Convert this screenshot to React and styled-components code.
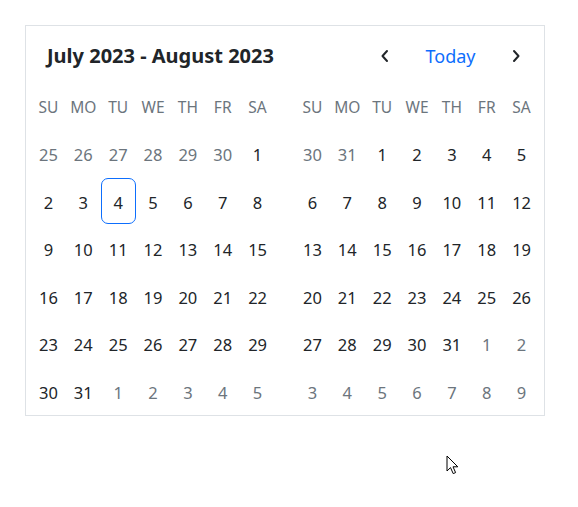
import React from 'react'
import styled, { createGlobalStyle } from 'styled-components'

const GlobalStyle = createGlobalStyle`
    body {
        margin: 0;
        background: #ffffff;
        font-family: "Noto Sans", "Open Sans", sans-serif;
        color: #212529;
    }
`

const WEEKDAYS = ['SU', 'MO', 'TU', 'WE', 'TH', 'FR', 'SA']

const range = (a, b) => {
    const out = []
    for (let i = a; i <= b; i++) out.push(i)
    return out
}

const months = [
    {
        key: 'jul',
        days: [
            ...range(25, 30).map(d => ({ d, muted: true })),
            ...range(1, 31).map(d => ({ d, selected: d === 4 })),
            ...range(1, 5).map(d => ({ d, muted: true })),
        ],
    },
    {
        key: 'aug',
        days: [
            ...range(30, 31).map(d => ({ d, muted: true })),
            ...range(1, 31).map(d => ({ d })),
            ...range(1, 9).map(d => ({ d, muted: true })),
        ],
    },
]

const ChevronLeft = () => (
    <svg width="10" height="14" viewBox="0 0 10 14">
        <polyline points="7,2 2.5,7 7,12" fill="none" stroke="#212529" strokeWidth="2" strokeLinecap="round" strokeLinejoin="round" />
    </svg>
)

const ChevronRight = () => (
    <svg width="10" height="14" viewBox="0 0 10 14">
        <polyline points="3,2 7.5,7 3,12" fill="none" stroke="#212529" strokeWidth="2" strokeLinecap="round" strokeLinejoin="round" />
    </svg>
)

const App = () => {
    return (
        <Page>
            <GlobalStyle />
            <Picker>
                <Header>
                    <Title>July 2023 - August 2023</Title>
                    <Nav>
                        <Arrow><ChevronLeft /></Arrow>
                        <TodayButton>Today</TodayButton>
                        <Arrow><ChevronRight /></Arrow>
                    </Nav>
                </Header>
                <Months>
                    {months.map(m => (
                        <Grid key={m.key}>
                            {WEEKDAYS.map(w => <WeekDay key={w}>{w}</WeekDay>)}
                            {m.days.map((day, i) => (
                                <Day key={i} $muted={day.muted} $selected={day.selected}>{day.d}</Day>
                            ))}
                        </Grid>
                    ))}
                </Months>
            </Picker>
            <Cursor width="13" height="20" viewBox="0 0 13 20">
                <path d="M1 1 L1 16 L4.5 12.6 L7.2 18.6 L9.6 17.6 L7 11.8 L11.8 11.8 Z" fill="#ffffff" stroke="#000000" strokeWidth="1" strokeLinejoin="round" />
            </Cursor>
        </Page>
    )
}

const Page = styled.div`
    position: relative;
    width: 578px;
    height: 507px;
    padding: 25px;
    box-sizing: border-box;
`

const Picker = styled.div`
    width: 520px;
    box-sizing: border-box;
    border: 1px solid #dee2e6;
    padding: 0 5px;
    background: #ffffff;
`

const Header = styled.div`
    height: 57px;
    display: flex;
    align-items: center;
    justify-content: space-between;
    padding: 2px 8px 0 16px;
    box-sizing: border-box;
`

const Title = styled.div`
    font-size: 20px;
    font-weight: 700;
    color: #212529;
`

const Nav = styled.div`
    display: flex;
    align-items: center;
`

const Arrow = styled.button`
    width: 30px;
    height: 32px;
    border: none;
    background: transparent;
    padding: 0;
    display: flex;
    align-items: center;
    justify-content: center;
`

const TodayButton = styled.button`
    width: 101px;
    height: 32px;
    border: none;
    background: transparent;
    padding: 0;
    font-family: "Noto Sans", "Open Sans", sans-serif;
    font-size: 18px;
    color: #0d6efd;
`

const Months = styled.div`
    display: grid;
    grid-template-columns: 1fr 1fr;
    column-gap: 20px;
`

const Grid = styled.div`
    display: grid;
    grid-template-columns: repeat(7, 1fr);
    grid-auto-rows: 46px;
    row-gap: 1.6px;
`

const WeekDay = styled.div`
    display: flex;
    align-items: center;
    justify-content: center;
    padding-top: 1px;
    font-size: 15.5px;
    color: #6c757d;
`

const Day = styled.div`
    display: flex;
    align-items: center;
    justify-content: center;
    padding-top: 2px;
    box-sizing: border-box;
    font-size: 16.5px;
    color: ${p => (p.$muted ? '#6c757d' : '#212529')};
    border: 1px solid ${p => (p.$selected ? '#0d6efd' : 'transparent')};
    border-radius: 7px;
`

const Cursor = styled.svg`
    position: absolute;
    left: 446px;
    top: 455px;
`

export default App
